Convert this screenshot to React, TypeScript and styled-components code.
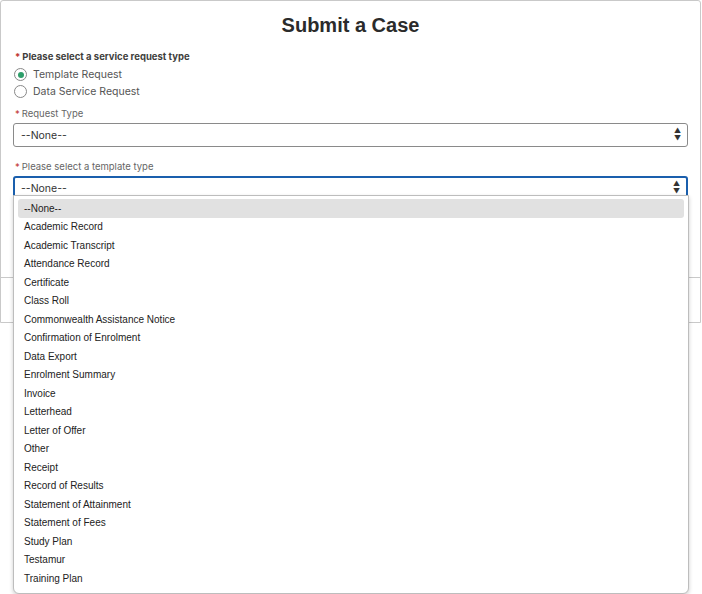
import styled, { createGlobalStyle } from 'styled-components'

const Global = createGlobalStyle`
  body { margin: 0; background: #fff; font-family: Inter, "Noto Sans", sans-serif; }
`

const Page = styled.div`
  position: relative;
  width: 702px;
  height: 594px;
  overflow: hidden;
`

const Modal = styled.div`
  width: 701px;
  height: 323px;
  box-sizing: border-box;
  border: 1px solid #c9c9c9;
  border-radius: 3px 3px 0 0;
  background: #fff;
  display: flex;
  flex-direction: column;
`

const Title = styled.h1`
  margin: 13px 0 14px;
  text-align: center;
  font: bold 20px "Liberation Sans", Arial, sans-serif;
  color: #2b2b2b;
`

const Body = styled.div`
  padding: 0 12px;
  display: flex;
  flex-direction: column;
`

const Label = styled.div<{ $bold?: boolean }>`
  font-size: 9.5px;
  color: ${p => (p.$bold ? '#3e3e3c' : '#666')};
  font-weight: ${p => (p.$bold ? 700 : 400)};
  margin: 0 0 4px 2px;
  &::before { content: '*'; color: #c23934; margin-right: 2px; }
`

const Radio = styled.label`
  display: flex;
  align-items: center;
  gap: 6px;
  font-size: 10.5px;
  color: #555;
  height: 17px;
  margin-left: 1px;
`

const Dot = styled.span<{ $on?: boolean }>`
  width: 11px;
  height: 11px;
  border-radius: 50%;
  border: 1px solid #888;
  display: grid;
  place-items: center;
  &::after {
    content: '';
    width: 6px;
    height: 6px;
    border-radius: 50%;
    background: ${p => (p.$on ? '#2e9e6a' : 'transparent')};
  }
`

const Spacer = styled.div`
  height: 8px;
`

const Select = styled.div<{ $focus?: boolean }>`
  height: 24px;
  box-sizing: border-box;
  border: ${p => (p.$focus ? '2px solid #1a5fad' : '1px solid #8a8a8a')};
  border-radius: 3px;
  padding: 0 6px 0 ${p => (p.$focus ? 6 : 7)}px;
  display: flex;
  align-items: center;
  justify-content: space-between;
  font-size: 10.5px;
  color: #333;
  margin-bottom: 14px;
`

const Arrows = styled.span`
  display: flex;
  flex-direction: column;
  font-size: 7px;
  line-height: 8px;
  color: #333;
`

const Footer = styled.div`
  margin-top: auto;
  height: 44px;
  border-top: 1px solid #c9c9c9;
`

const List = styled.ul`
  position: absolute;
  left: 13px;
  top: 195px;
  width: 676px;
  margin: 0;
  padding: 3px 4px 5px;
  box-sizing: border-box;
  list-style: none;
  background: #fff;
  border: 1px solid #bdbdbd;
  border-radius: 0 0 6px 6px;
  box-shadow: 0 2px 4px rgba(0,0,0,0.2);
  z-index: 2;
`

const Item = styled.li<{ $active?: boolean }>`
  height: 18.5px;
  display: flex;
  align-items: center;
  padding-left: 6px;
  font: 10px "Liberation Sans", Arial, sans-serif;
  color: #222;
  background: ${p => (p.$active ? '#e1e1e1' : 'transparent')};
  border-radius: 3px;
`

const options = [
  '--None--', 'Academic Record', 'Academic Transcript', 'Attendance Record', 'Certificate',
  'Class Roll', 'Commonwealth Assistance Notice', 'Confirmation of Enrolment', 'Data Export',
  'Enrolment Summary', 'Invoice', 'Letterhead', 'Letter of Offer', 'Other', 'Receipt',
  'Record of Results', 'Statement of Attainment', 'Statement of Fees', 'Study Plan',
  'Testamur', 'Training Plan',
]

export default function App() {
  return (
    <Page>
      <Global />
      <Modal>
        <Title>Submit a Case</Title>
        <Body>
          <Label $bold>Please select a service request type</Label>
          <Radio><Dot $on />Template Request</Radio>
          <Radio><Dot />Data Service Request</Radio>
          <Spacer />
          <Label>Request Type</Label>
          <Select>--None--<Arrows><span>▲</span><span>▼</span></Arrows></Select>
          <Label>Please select a template type</Label>
          <Select $focus>--None--<Arrows><span>▲</span><span>▼</span></Arrows></Select>
        </Body>
        <Footer />
      </Modal>
      <List>
        {options.map((o, i) => (
          <Item key={o} $active={i === 0}>{o}</Item>
        ))}
      </List>
    </Page>
  )
}
